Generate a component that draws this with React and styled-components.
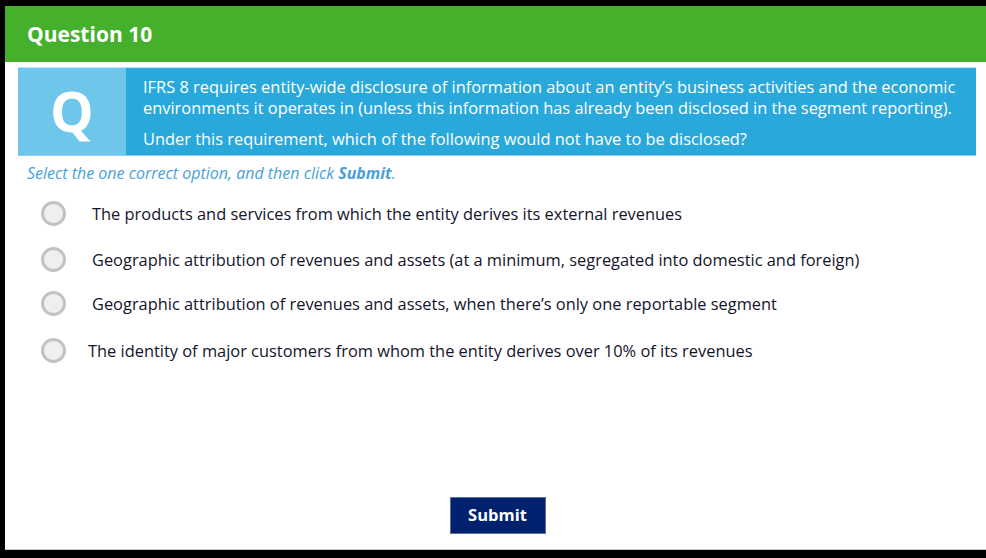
import React from "react";
import styled, { createGlobalStyle } from "styled-components";

const Global = createGlobalStyle`
  html, body { margin: 0; padding: 0; background: #000; }
  body { font-family: "Open Sans", "Noto Sans", sans-serif; }
`;

const Page = styled.div`
  width: 986px;
  height: 558px;
  background: #000;
  padding: 6px 0 0 5px;
  box-sizing: border-box;
`;

const Panel = styled.div`
  width: 981px;
  height: 544px;
  background: #fff;
  border-bottom: 1px solid #c8c8c8;
  box-sizing: border-box;
  display: flex;
  flex-direction: column;
`;

const Header = styled.div`
  height: 56px;
  background: #44b02b;
  display: flex;
  align-items: center;
  padding-left: 22px;
  color: #fff;
  font-weight: 700;
  font-size: 21px;
  padding-bottom: 1px;
  box-sizing: border-box;
`;

const QuestionBox = styled.div`
  margin: 5px 0 0 13px;
  width: 958px;
  height: 89px;
  display: flex;
  border-top: 1px solid #bfe4f4;
  border-bottom: 1px solid #8fd0ee;
  box-sizing: border-box;
`;

const QBadge = styled.div`
  width: 108px;
  background: #6ec6ea;
  color: #fff;
  font-weight: 700;
  font-size: 55px;
  display: flex;
  align-items: center;
  justify-content: center;
  padding-bottom: 2px;
`;

const QText = styled.div`
  flex: 1;
  background: #29a9db;
  color: #fff;
  font-size: 16.4px;
  line-height: 21px;
  padding: 8px 6px 0 17px;
  box-sizing: border-box;
  p { margin: 0; }
  p + p { margin-top: 10px; }
`;

const Instruction = styled.div`
  margin: 6px 0 0 22px;
  color: #4a9fd8;
  font-style: italic;
  font-size: 16px;
  line-height: 22px;
  b { font-weight: 700; }
`;

const Options = styled.div`
  display: flex;
  flex-direction: column;
  margin-top: 6px;
`;

const Option = styled.label`
  display: flex;
  align-items: center;
  height: ${(p) => p.h}px;
  cursor: pointer;
`;

const Radio = styled.span`
  width: 25px;
  height: 25px;
  margin-left: 36px;
  border-radius: 50%;
  border: 3px solid #c2c2c2;
  background: #efefef;
  box-sizing: border-box;
  flex: none;
`;

const OptionText = styled.span`
  margin-left: ${(p) => p.indent}px;
  color: #14142b;
  font-size: 16.4px;
`;

const Footer = styled.div`
  margin-top: auto;
  display: flex;
  justify-content: center;
  padding: 0 0 15px 4px;
`;

const SubmitButton = styled.button`
  width: 96px;
  height: 37px;
  background: #00226e;
  border: 1px solid #5b6f9e;
  color: #fff;
  font-family: "Open Sans", "Noto Sans", sans-serif;
  font-weight: 700;
  font-size: 16.5px;
  padding: 0 0 2px;
  cursor: pointer;
`;

const options = [
  { text: "The products and services from which the entity derives its external revenues", indent: 26, h: 47 },
  { text: "Geographic attribution of revenues and assets (at a minimum, segregated into domestic and foreign)", indent: 26, h: 44 },
  { text: "Geographic attribution of revenues and assets, when there\u2019s only one reportable segment", indent: 26, h: 44 },
  { text: "The identity of major customers from whom the entity derives over 10% of its revenues", indent: 22, h: 50 },
];

export default function App() {
  return (
    <>
      <Global />
      <Page>
        <Panel>
          <Header>Question 10</Header>
          <QuestionBox>
            <QBadge>Q</QBadge>
            <QText>
              <p>
                IFRS 8 requires entity-wide disclosure of information about an entity’s business activities and the economic
                environments it operates in (unless this information has already been disclosed in the segment reporting).
              </p>
              <p>Under this requirement, which of the following would not have to be disclosed?</p>
            </QText>
          </QuestionBox>
          <Instruction>
            Select the one correct option, and then click <b>Submit</b>.
          </Instruction>
          <Options>
            {options.map((o) => (
              <Option key={o.text} h={o.h}>
                <Radio />
                <OptionText indent={o.indent}>{o.text}</OptionText>
              </Option>
            ))}
          </Options>
          <Footer>
            <SubmitButton>Submit</SubmitButton>
          </Footer>
        </Panel>
      </Page>
    </>
  );
}
